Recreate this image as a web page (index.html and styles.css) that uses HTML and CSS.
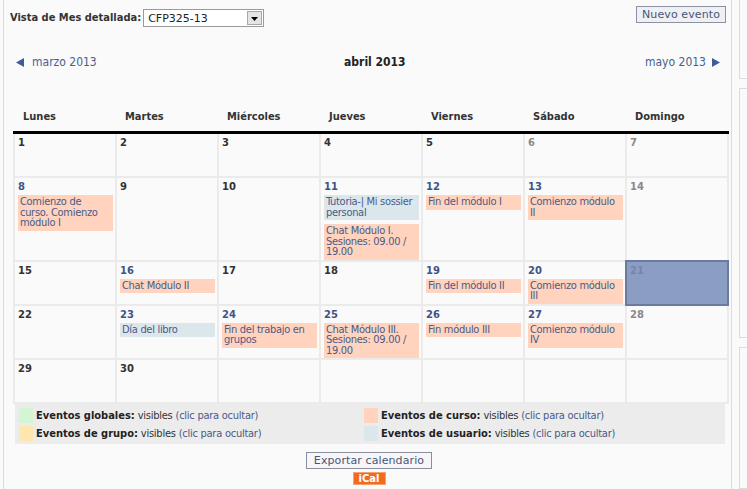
FILE: index.html
```html
<!DOCTYPE html>
<html lang="es">
<head>
<meta charset="utf-8">
<title>Calendario - abril 2013</title>
<link rel="stylesheet" href="styles.css">
</head>
<body>
<div class="page">
  <div class="main">
    <div class="topbar">
      <div class="view">
        <span class="view-label">Vista de Mes detallada:</span>
        <div class="select">
          <span class="select-value">CFP325-13</span>
          <span class="select-btn"><svg width="7" height="4" viewBox="0 0 7 4"><polygon points="0,0 7,0 3.5,4" fill="#000"/></svg></span>
        </div>
      </div>
      <span class="btn new-event">Nuevo evento</span>
    </div>

    <div class="monthnav">
      <a class="nav-link prev"><svg class="tri" width="8" height="9" viewBox="0 0 8 9"><polygon points="8,0 8,9 0,4.5"/></svg>marzo 2013</a>
      <span class="current">abril 2013</span>
      <a class="nav-link next">mayo 2013<svg class="tri" width="8" height="9" viewBox="0 0 8 9"><polygon points="0,0 0,9 8,4.5"/></svg></a>
    </div>

    <div class="weekdays">
      <div class="wd">Lunes</div>
      <div class="wd">Martes</div>
      <div class="wd">Miércoles</div>
      <div class="wd">Jueves</div>
      <div class="wd">Viernes</div>
      <div class="wd">Sábado</div>
      <div class="wd">Domingo</div>
    </div>

    <div class="grid">
      <div class="cell"><span class="day">1</span></div>
      <div class="cell"><span class="day">2</span></div>
      <div class="cell"><span class="day">3</span></div>
      <div class="cell"><span class="day">4</span></div>
      <div class="cell"><span class="day">5</span></div>
      <div class="cell"><span class="day weekend">6</span></div>
      <div class="cell"><span class="day weekend">7</span></div>

      <div class="cell"><span class="day link">8</span><div class="ev course">Comienzo de curso. Comienzo módulo I</div></div>
      <div class="cell"><span class="day">9</span></div>
      <div class="cell"><span class="day">10</span></div>
      <div class="cell"><span class="day link">11</span><div class="ev user">Tutoria-| Mi sossier personal</div><div class="ev course">Chat Módulo I. Sesiones: 09.00 / 19.00</div></div>
      <div class="cell"><span class="day link">12</span><div class="ev course">Fin del módulo I</div></div>
      <div class="cell"><span class="day link">13</span><div class="ev course">Comienzo módulo II</div></div>
      <div class="cell"><span class="day weekend">14</span></div>

      <div class="cell"><span class="day">15</span></div>
      <div class="cell"><span class="day link">16</span><div class="ev course">Chat Módulo II</div></div>
      <div class="cell"><span class="day">17</span></div>
      <div class="cell"><span class="day">18</span></div>
      <div class="cell"><span class="day link">19</span><div class="ev course">Fin del módulo II</div></div>
      <div class="cell"><span class="day link">20</span><div class="ev course">Comienzo módulo III</div></div>
      <div class="cell today"><span class="day">21</span></div>

      <div class="cell"><span class="day">22</span></div>
      <div class="cell"><span class="day link">23</span><div class="ev user">Día del libro</div></div>
      <div class="cell"><span class="day link">24</span><div class="ev course">Fin del trabajo en grupos</div></div>
      <div class="cell"><span class="day link">25</span><div class="ev course">Chat Módulo III. Sesiones: 09.00 / 19.00</div></div>
      <div class="cell"><span class="day link">26</span><div class="ev course">Fin módulo III</div></div>
      <div class="cell"><span class="day link">27</span><div class="ev course">Comienzo módulo IV</div></div>
      <div class="cell"><span class="day weekend">28</span></div>

      <div class="cell"><span class="day">29</span></div>
      <div class="cell"><span class="day">30</span></div>
      <div class="cell"></div>
      <div class="cell"></div>
      <div class="cell"></div>
      <div class="cell"></div>
      <div class="cell"></div>
    </div>

    <div class="legend">
      <div class="key"><span class="sw global"></span><b>Eventos globales:</b>&nbsp;visibles <a class="toggle">(clic para ocultar)</a></div>
      <div class="key"><span class="sw course"></span><b>Eventos de curso:</b>&nbsp;visibles <a class="toggle">(clic para ocultar)</a></div>
      <div class="key"><span class="sw group"></span><b>Eventos de grupo:</b>&nbsp;visibles <a class="toggle">(clic para ocultar)</a></div>
      <div class="key"><span class="sw user"></span><b>Eventos de usuario:</b>&nbsp;visibles <a class="toggle">(clic para ocultar)</a></div>
    </div>

    <div class="export">
      <span class="btn export-btn">Exportar calendario</span>
      <span class="ical">iCal</span>
    </div>
  </div>

  <div class="sidebar">
    <div class="sbox b1"></div>
    <div class="sbox b2"></div>
    <div class="sbox b3"></div>
  </div>
</div>
</body>
</html>
```

FILE: styles.css
```css
html, body {
  margin: 0;
  padding: 0;
}

body {
  background: #fafafa;
  font-family: "DejaVu Sans Condensed", "DejaVu Sans", sans-serif;
  font-size: 11px;
  color: #333;
  overflow: hidden;
  width: 747px;
  height: 489px;
}

.page {
  display: flex;
  align-items: flex-start;
  height: 489px;
  overflow: hidden;
}

.main {
  margin-left: 3px;
  width: 729px;
  height: 489px;
  box-sizing: border-box;
  border-left: 1px solid #dcdcdc;
  border-right: 1px solid #dcdcdc;
  background: #fafafa;
  padding-top: 6px;
  flex-shrink: 0;
}

/* top bar */
.topbar {
  display: flex;
  justify-content: space-between;
  align-items: flex-start;
  padding: 0 5px 0 6px;
  height: 21px;
}

.view {
  display: flex;
  align-items: center;
  margin-top: 3px;
}

.view-label {
  font-weight: bold;
  font-size: 11px;
  line-height: 18px;
  color: #333;
  margin-right: 2px;
}

.select {
  width: 121px;
  height: 18px;
  box-sizing: border-box;
  border: 1px solid #9a9a9a;
  background: #fff;
  display: flex;
  align-items: center;
  justify-content: space-between;
}

.select-value {
  font-family: "DejaVu Sans", sans-serif;
  font-size: 11px;
  color: #222;
  padding-left: 4px;
}

.select-btn {
  width: 15px;
  height: 14px;
  margin-right: 1px;
  box-sizing: border-box;
  border: 1px solid #a8a8a8;
  background: #e4e4e4;
  display: flex;
  align-items: center;
  justify-content: center;
  padding-top: 2px;
}

.btn {
  display: inline-block;
  box-sizing: border-box;
  height: 17px;
  line-height: 15px;
  border: 1px solid #8c92a4;
  background: #eef0f4;
  font-family: "DejaVu Sans", sans-serif;
  font-size: 11px;
  color: #4a5578;
  letter-spacing: 0.1px;
}

.new-event {
  width: 90px;
  text-align: center;
}

/* month navigation */
.monthnav {
  margin: 27px 11px 0 12px;
  height: 16px;
  display: flex;
  justify-content: space-between;
  align-items: center;
  font-size: 12px;
  line-height: 16px;
}

.nav-link {
  color: #4a5f8f;
  display: flex;
  align-items: center;
}

.tri {
  fill: #3e5c9a;
}

.prev .tri {
  margin-right: 8px;
}

.next .tri {
  margin-left: 6px;
}

.current {
  font-weight: bold;
  color: #222;
  margin-left: 8px;
}

/* weekday header */
.weekdays {
  margin: 40px 0 0 9px;
  width: 716px;
  display: grid;
  grid-template-columns: repeat(7, 102px);
}

.wd {
  font-weight: bold;
  font-size: 11px;
  line-height: 14px;
  padding: 0 0 7px 10px;
  color: #333;
}

/* calendar grid */
.grid {
  margin-left: 9px;
  width: 716px;
  box-sizing: border-box;
  border-top: 3px solid #000;
  background: #ebebeb;
  padding: 0 2px 2px 2px;
  display: grid;
  grid-template-columns: repeat(7, 100px);
  grid-auto-rows: minmax(42px, auto);
  gap: 2px;
}

.cell {
  background: #fafafa;
  padding: 2px 2px 0 3px;
}

.day {
  display: block;
  font-family: "DejaVu Sans", sans-serif;
  font-weight: bold;
  font-size: 10px;
  line-height: 14px;
  color: #333;
}

.day.link {
  color: #3d5586;
}

.day.weekend {
  color: #8a8a8a;
}

.ev {
  margin-top: 1px;
  padding: 2px;
  font-size: 11px;
  letter-spacing: -0.3px;
  line-height: 10.5px;
  color: #4b5a88;
}

.ev + .ev {
  margin-top: 4px;
}

.ev.course {
  background: #ffd3bd;
}

.ev.user {
  background: #dce7ec;
}

.today {
  background: #8c9dc4;
  outline: 2px solid #6a7aa0;
}

.today .day {
  color: #7686aa;
}

/* legend */
.legend {
  margin-left: 11px;
  width: 710px;
  box-sizing: border-box;
  background: #ececec;
  padding: 4px 0 3px 4px;
  display: grid;
  grid-template-columns: 345px 1fr;
  row-gap: 3px;
}

.key {
  display: flex;
  align-items: center;
  height: 15px;
  font-size: 11px;
  letter-spacing: -0.25px;
  color: #333;
  white-space: nowrap;
}

.key b {
  font-size: 11px;
  letter-spacing: 0;
  color: #222;
}

.toggle {
  color: #4b5a88;
  margin-left: 3px;
}

.sw {
  width: 14px;
  height: 15px;
  margin-right: 3px;
  flex-shrink: 0;
}

.sw.global { background: #d3f5d3; }
.sw.course { background: #ffd3bd; }
.sw.group  { background: #fee7ae; }
.sw.user   { background: #dce7ec; }

/* export */
.export {
  margin-top: 8px;
  padding-left: 3px;
  display: flex;
  flex-direction: column;
  align-items: center;
}

.export-btn {
  padding: 0 7px;
  background: #f6f6f8;
  border-color: #8a8e9c;
}

.ical {
  margin-top: 3px;
  width: 33px;
  height: 13px;
  box-sizing: border-box;
  background: #f26a1e;
  border: 1px solid #f7a070;
  color: #fff;
  font-family: "DejaVu Sans", sans-serif;
  font-weight: bold;
  font-size: 10px;
  line-height: 11px;
  text-align: center;
}

/* right sidebar */
.sidebar {
  margin-left: 7px;
  width: 40px;
  flex-shrink: 0;
  display: flex;
  flex-direction: column;
}

.sbox {
  box-sizing: border-box;
  border: 1px solid #dcdcdc;
  border-right: none;
  background: #fafafa;
}

.b1 {
  height: 79px;
  border-top: none;
}

.b2 {
  margin-top: 9px;
  height: 250px;
}

.b3 {
  margin-top: 9px;
  height: 142px;
}
```
